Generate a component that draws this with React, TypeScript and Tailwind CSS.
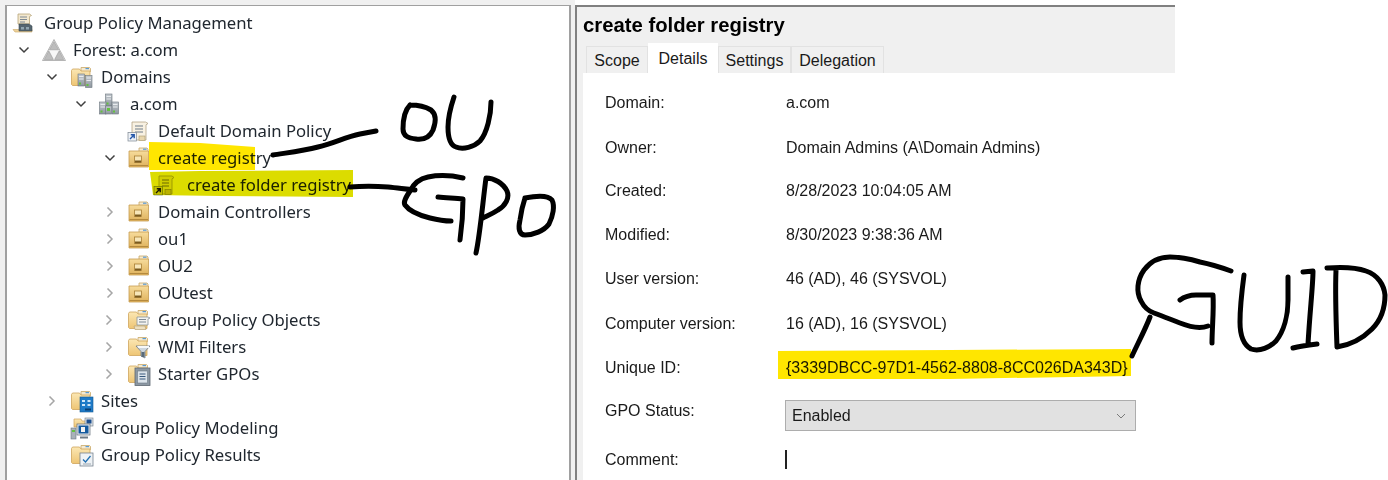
import React from "react";

const Defs = () => (
  <svg className="absolute w-0 h-0" aria-hidden="true">
    <defs>
      <linearGradient id="fold" x1="0" y1="0" x2="0" y2="1">
        <stop offset="0" stopColor="#fbe7b4" />
        <stop offset="1" stopColor="#eec574" />
      </linearGradient>
      <linearGradient id="ou" x1="0" y1="0" x2="0" y2="1">
        <stop offset="0" stopColor="#f7dc9c" />
        <stop offset="1" stopColor="#dfb25c" />
      </linearGradient>
      <linearGradient id="srv" x1="0" y1="0" x2="0" y2="1">
        <stop offset="0" stopColor="#c3c9cf" />
        <stop offset="1" stopColor="#8e979f" />
      </linearGradient>
    </defs>
  </svg>
);

const Ic = ({ children, w = 24 }: { children: React.ReactNode; w?: number }) => (
  <svg width={w} height={24} viewBox={`0 0 ${w} 24`} className="shrink-0 block">
    {children}
  </svg>
);

const FolderBack = () => (
  <>
    <path d="M11 2.5h8.5l1 1v3H11z" fill="#f5ead0" stroke="#c9a868" strokeWidth=".8" />
    <rect x="15.5" y="3" width="3.5" height="1.2" fill="#5b9bd5" />
    <path d="M1.5 5.5l1-1.5h7l1.5 2h9v14.5H2.5l-1-1z" fill="url(#fold)" stroke="#cfa45c" strokeWidth=".8" />
  </>
);

const Server = ({ x, y }: { x: number; y: number }) => (
  <g transform={`translate(${x} ${y})`}>
    <rect x="0" y="0" width="6.5" height="12" fill="url(#srv)" stroke="#6c757d" strokeWidth=".6" />
    <path d="M1 2.5h4.5M1 5h4.5" stroke="#eef1f3" strokeWidth=".9" />
    <rect x="1" y="8.5" width="2" height="2" fill="#63c23e" />
  </g>
);

const RootIcon = () => (
  <Ic>
    <path d="M6 3h11.5l2 1.5-2 1V13H6z" fill="#f3e8cf" stroke="#b8a478" strokeWidth=".8" />
    <path d="M8 6h7M8 8.5h7M8 11h5" stroke="#7f8a94" strokeWidth="1" />
    <path d="M1 18.5h19v2.5H3z" fill="#eed29b" stroke="#c9a868" strokeWidth=".6" />
    <path d="M7 13h10l3 2v5H7z" fill="#55656f" stroke="#3d4a52" strokeWidth=".6" />
    <rect x="9" y="16" width="3" height="2.5" fill="#90a4ae" />
    <rect x="14" y="16" width="3" height="2.5" fill="#90a4ae" />
  </Ic>
);

const ForestIcon = () => (
  <Ic>
    <path d="M12 1.5L23.5 22.5H.5z" fill="#f7f7f7" stroke="#a3a3a3" strokeWidth=".8" />
    <path d="M12 3.5L7.4 11.8h9.2z" fill="#bdbdbd" stroke="#8f8f8f" strokeWidth=".5" />
    <path d="M6.8 12.8L2.2 21.5h9.2z" fill="#bdbdbd" stroke="#8f8f8f" strokeWidth=".5" />
    <path d="M17.2 12.8L12.6 21.5h9.2z" fill="#bdbdbd" stroke="#8f8f8f" strokeWidth=".5" />
  </Ic>
);

const DomainsIcon = () => (
  <Ic>
    <FolderBack />
    <Server x={8} y={9} />
    <Server x={15.5} y={10.5} />
  </Ic>
);

const DomainIcon = () => (
  <Ic>
    <Server x={6.5} y={2} />
    <Server x={0.5} y={10} />
    <Server x={13} y={10} />
    <rect x="6.5" y="14" width="6" height="8" fill="url(#srv)" stroke="#6c757d" strokeWidth=".6" />
    <rect x="8" y="16" width="3" height="3" fill="#63c23e" />
  </Ic>
);

const Shortcut = ({ bg, fg }: { bg: string; fg: string }) => (
  <>
    <rect x="1" y="13.5" width="8.5" height="8.5" fill={bg} stroke="#7d8790" strokeWidth=".7" />
    <path d="M3 20l3.5-3.5M3.8 15.8h3.4v3.4" stroke={fg} strokeWidth="1.4" fill="none" />
  </>
);

const PolicyLinkIcon = () => (
  <Ic>
    <path d="M5 3h13.5l2.5 1.5-2 1.3V21H5z" fill="#f8f1e2" stroke="#b3a385" strokeWidth=".8" />
    <path d="M8 7h8M8 10h8M8 13h8" stroke="#6f7d8a" strokeWidth="1" />
    <rect x="12" y="17" width="6" height="4.5" fill="#e8d6ad" stroke="#a9996f" strokeWidth=".6" />
    <Shortcut bg="#eef2f7" fg="#2456a8" />
  </Ic>
);

const GpoLinkIcon = () => (
  <Ic>
    <path d="M6 3h13l2 1.5-2 1.3V21H6z" fill="#f2ee63" stroke="#a9a436" strokeWidth=".8" />
    <path d="M9 7h7M9 10h7M9 13h7" stroke="#7d7a22" strokeWidth="1" />
    <rect x="12" y="16.5" width="6" height="5" fill="#d9cf3c" stroke="#8c8a2b" strokeWidth=".6" />
    <Shortcut bg="#e2de3a" fg="#1a1a1a" />
  </Ic>
);

const OuIcon = () => (
  <Ic>
    <path d="M11 2h8l1 1v3h-9z" fill="#f5ead0" stroke="#c9a868" strokeWidth=".8" />
    <rect x="15" y="2.6" width="3.5" height="1.2" fill="#5b9bd5" />
    <path d="M1 5h19.5v16H1z" fill="url(#ou)" stroke="#c79c50" strokeWidth=".8" />
    <rect x="6.5" y="10" width="7" height="6.5" fill="#f7e6b8" stroke="#a97f35" strokeWidth=".8" />
    <rect x="7" y="14.5" width="6" height="2" fill="#7a5a1e" />
    <path d="M1.5 19.5h18.5" stroke="#b58a3e" strokeWidth="1" />
  </Ic>
);

const GpoFolderIcon = () => (
  <Ic>
    <FolderBack />
    <path d="M10 9h11l2 1-2 1v6H10z" fill="#f3f3f0" stroke="#8c949b" strokeWidth=".8" />
    <path d="M12 11.5h7M12 14h7" stroke="#7f8a94" strokeWidth="1" />
    <path d="M7 18h11l1 3.5H8z" fill="#eee0c0" stroke="#b8a478" strokeWidth=".7" />
  </Ic>
);

const WmiIcon = () => (
  <Ic>
    <FolderBack />
    <path d="M9 11h14l-5 5.5V23l-4-2v-4.5z" fill="#cdd6de" stroke="#6d7a86" strokeWidth=".8" />
    <path d="M10 11h12v2H11.5z" fill="#f6f8fa" />
    <rect x="14.5" y="17" width="3" height="5" fill="#5a6a78" />
  </Ic>
);

const StarterIcon = () => (
  <Ic>
    <FolderBack />
    <rect x="8" y="6" width="15" height="17.5" fill="#8c98a3" stroke="#5c6670" strokeWidth=".8" />
    <rect x="10.5" y="9" width="10" height="12" fill="#dbe3ea" stroke="#6d7a86" strokeWidth=".6" />
    <path d="M12.5 12h6M12.5 14.5h6M12.5 17h6" stroke="#38597c" strokeWidth="1" />
  </Ic>
);

const SitesIcon = () => (
  <Ic>
    <FolderBack />
    <rect x="10" y="8" width="13" height="15" fill="#1f7bc8" stroke="#15598f" strokeWidth=".6" />
    <path d="M12 11h3v2h-3zM17.5 11h3v2h-3zM12 15h3v2h-3zM17.5 15h3v2h-3z" fill="#cfe6f8" />
    <rect x="15" y="19.5" width="6" height="2" fill="#0b3f72" />
  </Ic>
);

const ModelingIcon = () => (
  <Ic>
    <path d="M4 3h7l1 2h5v6H4z" fill="url(#fold)" stroke="#cfa45c" strokeWidth=".7" />
    <rect x="15" y="2" width="8" height="8" fill="#dfe4e9" stroke="#6d7a86" strokeWidth=".6" />
    <rect x="16.5" y="3.5" width="5" height="4" fill="#1c4f8f" />
    <rect x="1" y="12" width="5" height="11" fill="#a9b1b8" stroke="#6d7a86" strokeWidth=".6" />
    <rect x="2" y="14" width="3" height="2" fill="#63c23e" />
    <rect x="7" y="8" width="13" height="11" fill="#e6ebef" stroke="#5f6b76" strokeWidth=".7" />
    <rect x="8.5" y="9.5" width="10" height="8" fill="#145a9e" />
    <rect x="11" y="11" width="4" height="5" fill="#f3f3f3" />
    <path d="M10 21.5h8" stroke="#6d7a86" strokeWidth="2" />
  </Ic>
);

const ResultsIcon = () => (
  <Ic>
    <FolderBack />
    <rect x="10" y="10" width="13" height="13" fill="#eef2f5" stroke="#77838e" strokeWidth=".8" />
    <path d="M13 16.5l2.5 2.5 5-6" stroke="#1f6fb2" strokeWidth="1.3" fill="none" />
    <path d="M13 21h8" stroke="#9aa6b0" strokeWidth="1" />
  </Ic>
);

const ChevDown = () => (
  <svg width="12" height="8" viewBox="0 0 12 8" className="block">
    <path d="M1.5 1.5L6 6l4.5-4.5" stroke="#404040" strokeWidth="1.5" fill="none" />
  </svg>
);

const ChevRight = () => (
  <svg width="12" height="10" viewBox="0 0 12 10" className="block">
    <path d="M3.5.5L8 5 3.5 9.5" stroke="#a6a6a6" strokeWidth="1.5" fill="none" />
  </svg>
);

type Row = {
  pad: string;
  chev?: "down" | "right" | "none";
  icon: React.ReactNode;
  text: string;
  gap: string;
};

const rows: Row[] = [
  { pad: "pl-[5px]", icon: <RootIcon />, text: "Group Policy Management", gap: "ml-[8px]" },
  { pad: "pl-[11px]", chev: "down", icon: <ForestIcon />, text: "Forest: a.com", gap: "ml-[7px]" },
  { pad: "pl-[39px]", chev: "down", icon: <DomainsIcon />, text: "Domains", gap: "ml-[7px]" },
  { pad: "pl-[68px]", chev: "down", icon: <DomainIcon />, text: "a.com", gap: "ml-[7px]" },
  { pad: "pl-[96px]", chev: "none", icon: <PolicyLinkIcon />, text: "Default Domain Policy", gap: "ml-[7px]" },
  { pad: "pl-[97px]", chev: "down", icon: <OuIcon />, text: "create registry", gap: "ml-[6px]" },
  { pad: "pl-[122px]", chev: "none", icon: <GpoLinkIcon />, text: "create folder registry", gap: "ml-[10px]" },
  { pad: "pl-[97px]", chev: "right", icon: <OuIcon />, text: "Domain Controllers", gap: "ml-[6px]" },
  { pad: "pl-[97px]", chev: "right", icon: <OuIcon />, text: "ou1", gap: "ml-[6px]" },
  { pad: "pl-[97px]", chev: "right", icon: <OuIcon />, text: "OU2", gap: "ml-[6px]" },
  { pad: "pl-[97px]", chev: "right", icon: <OuIcon />, text: "OUtest", gap: "ml-[6px]" },
  { pad: "pl-[96px]", chev: "right", icon: <GpoFolderIcon />, text: "Group Policy Objects", gap: "ml-[7px]" },
  { pad: "pl-[96px]", chev: "right", icon: <WmiIcon />, text: "WMI Filters", gap: "ml-[7px]" },
  { pad: "pl-[96px]", chev: "right", icon: <StarterIcon />, text: "Starter GPOs", gap: "ml-[7px]" },
  { pad: "pl-[39px]", chev: "right", icon: <SitesIcon />, text: "Sites", gap: "ml-[7px]" },
  { pad: "pl-[39px]", chev: "none", icon: <ModelingIcon />, text: "Group Policy Modeling", gap: "ml-[7px]" },
  { pad: "pl-[39px]", chev: "none", icon: <ResultsIcon />, text: "Group Policy Results", gap: "ml-[7px]" },
];

const details: { label: string; value?: string; h: string }[] = [
  { label: "Domain:", value: "a.com", h: "h-[45px]" },
  { label: "Owner:", value: "Domain Admins (A\\Domain Admins)", h: "h-[43px]" },
  { label: "Created:", value: "8/28/2023 10:04:05 AM", h: "h-[44px]" },
  { label: "Modified:", value: "8/30/2023 9:38:36 AM", h: "h-[44px]" },
  { label: "User version:", value: "46 (AD), 46 (SYSVOL)", h: "h-[45px]" },
  { label: "Computer version:", value: "16 (AD), 16 (SYSVOL)", h: "h-[44px]" },
  { label: "Unique ID:", value: "{3339DBCC-97D1-4562-8808-8CC026DA343D}", h: "h-[42px]" },
];

const tabs = [
  { t: "Scope", w: "w-[62px]", active: false },
  { t: "Details", w: "w-[70px]", active: true },
  { t: "Settings", w: "w-[73px]", active: false },
  { t: "Delegation", w: "w-[93px]", active: false },
];

const ink = [
  "M273 155 C285 153 303 151 318 147 C335 143 345 137 360 134 L376 131",
  "M410 105 C418 105 426 107 431 110 C436 114 436 122 433 130 C430 137 424 140 416 139 C408 138 403 136 403 129 C403 119 405 110 410 105",
  "M454 97 C451 106 448 117 448 127 C448 137 450 145 456 147 C463 150 474 147 480 141 C487 133 491 115 491 102",
  "M350 187 C362 186 375 186 388 187 C398 188 405 189 415 190",
  "M463 178 C450 175 438 175 428 177 C418 179 413 185 410 191 C406 197 403 202 405 205 C410 212 422 216 430 218 C438 220 445 221 451 221",
  "M438 197 C447 198 455 198 463 199 C463 212 462 226 460 240",
  "M476 253 C480 235 483 200 486 178 C494 178 503 183 507 191 C510 198 505 206 498 210 C492 214 487 216 483 218",
  "M525 198 C535 196 548 195 552 200 C555 206 553 216 549 224 C544 231 533 235 525 235 C519 235 518 228 520 220 C521 212 523 204 525 198",
  "M1132 356 C1138 343 1145 330 1150 317",
  "M1231 271 C1220 267 1210 264 1200 262 C1190 259 1180 257 1170 257 C1158 257 1150 262 1144 270 C1137 280 1136 292 1141 301 C1144 307 1148 311 1154 313 C1165 317 1172 320 1180 323 C1190 327 1200 329 1208 326",
  "M1180 300 C1184 297 1190 295 1196 295 L1213 295 C1214 310 1212 328 1212 343",
  "M1244 275 C1242 290 1240 308 1240 322 C1240 335 1244 345 1251 349 C1260 352 1270 347 1276 341 C1284 331 1288 315 1288 300 L1288 277",
  "M1303 272 L1313 271 C1313 285 1310 310 1308 344 M1293 348 C1300 346 1308 345 1317 344",
  "M1327 268 C1340 267 1355 267 1366 271 C1378 275 1384 285 1385 295 C1385 308 1381 320 1372 329 C1362 339 1350 345 1337 347 C1336 320 1335 295 1336 270",
];

export default function App() {
  return (
    <div className="relative w-[1388px] h-[480px] overflow-hidden bg-white flex">
      <Defs />
      {/* left tree pane */}
      <div className="w-[575px] h-full bg-[#f0f0f0] pt-[5px] pl-[5px] pr-[4px] shrink-0">
        <div className="h-[480px] bg-white border-t border-l-2 border-r-2 border-[#a0a0a0] pt-[3px] font-['Noto_Sans',sans-serif] text-[16.7px] text-[#20272f]">
          {rows.map((r) => (
            <div key={r.text} className={`flex items-center h-[27px] ${r.pad}`}>
              {r.chev && (
                <div className="w-[24px] h-full flex items-center shrink-0">
                  {r.chev === "down" && <ChevDown />}
                  {r.chev === "right" && <ChevRight />}
                </div>
              )}
              {r.icon}
              <span className={`${r.gap} whitespace-nowrap`}>{r.text}</span>
            </div>
          ))}
        </div>
      </div>

      {/* right details pane */}
      <div className="w-[600px] h-full shrink-0 bg-white pt-[5px] font-['Liberation_Sans',sans-serif] text-[#1a1a1a]">
        <div className="h-full border-t-2 border-l-2 border-[#808080] bg-[#f0f0f0] flex flex-col">
          <div className="h-[36px] pl-[6px] flex items-center text-[20.3px] font-bold text-black whitespace-nowrap">
            create folder registry
          </div>
          <div className="flex h-[30px] items-end pl-[9px] relative z-10">
            {tabs.map((t) =>
              t.active ? (
                <div key={t.t} className={`${t.w} h-[32px] -mb-[2px] bg-white flex items-center justify-center text-[16px]`}>
                  {t.t}
                </div>
              ) : (
                <div key={t.t} className={`${t.w} h-[27px] bg-[#f0f0f0] border border-b-0 border-[#e2e2e2] flex items-center justify-center text-[16px] pt-[1px]`}>
                  {t.t}
                </div>
              )
            )}
          </div>
          <div className="flex-1 ml-[6px] bg-white pl-[22px] pt-[20px] text-[16px]">
            {details.map((d) => (
              <div key={d.label} className={`flex ${d.h} leading-[20px]`}>
                <div className="w-[181px] shrink-0">{d.label}</div>
                <div className="whitespace-nowrap">{d.value}</div>
              </div>
            ))}
            <div className="flex h-[50px] leading-[20px]">
              <div className="w-[180px] shrink-0 mt-[1px]">GPO Status:</div>
              <div className="w-[351px] h-[31px] bg-[#e1e1e1] border border-[#adadad] flex items-center justify-between pl-[6px] pr-[9px] text-[16px]">
                <span>Enabled</span>
                <svg width="10" height="6" viewBox="0 0 10 6">
                  <path d="M1 1l4 4 4-4" stroke="#7a7a7a" strokeWidth="1" fill="none" />
                </svg>
              </div>
            </div>
            <div className="flex h-[24px] leading-[20px]">
              <div className="w-[180px] shrink-0">Comment:</div>
              <div className="w-[2px] h-[19px] bg-[#222]" />
            </div>
          </div>
        </div>
      </div>

      {/* marker highlights drawn over the screenshot */}
      <svg className="absolute left-0 top-0 mix-blend-multiply pointer-events-none" width="1388" height="480" viewBox="0 0 1388 480">
        <path d="M149 142 L200 143 L255 147 L255 170 L149 170 Z" fill="#ffe600" />
        <path d="M150 172 L200 171 L353 170 L353 197 L220 196 L153 195 Z" fill="#dcdc00" />
        <path d="M778 351 L950 350 L1131 349 L1131 376 L950 379 L778 379 Z" fill="#ffe600" />
      </svg>

      {/* hand-drawn ink annotations */}
      <svg className="absolute left-0 top-0 pointer-events-none" width="1388" height="480" viewBox="0 0 1388 480">
        {ink.map((d) => (
          <path key={d} d={d} fill="none" stroke="#000" strokeWidth="5" strokeLinecap="round" strokeLinejoin="round" />
        ))}
      </svg>
    </div>
  );
}
